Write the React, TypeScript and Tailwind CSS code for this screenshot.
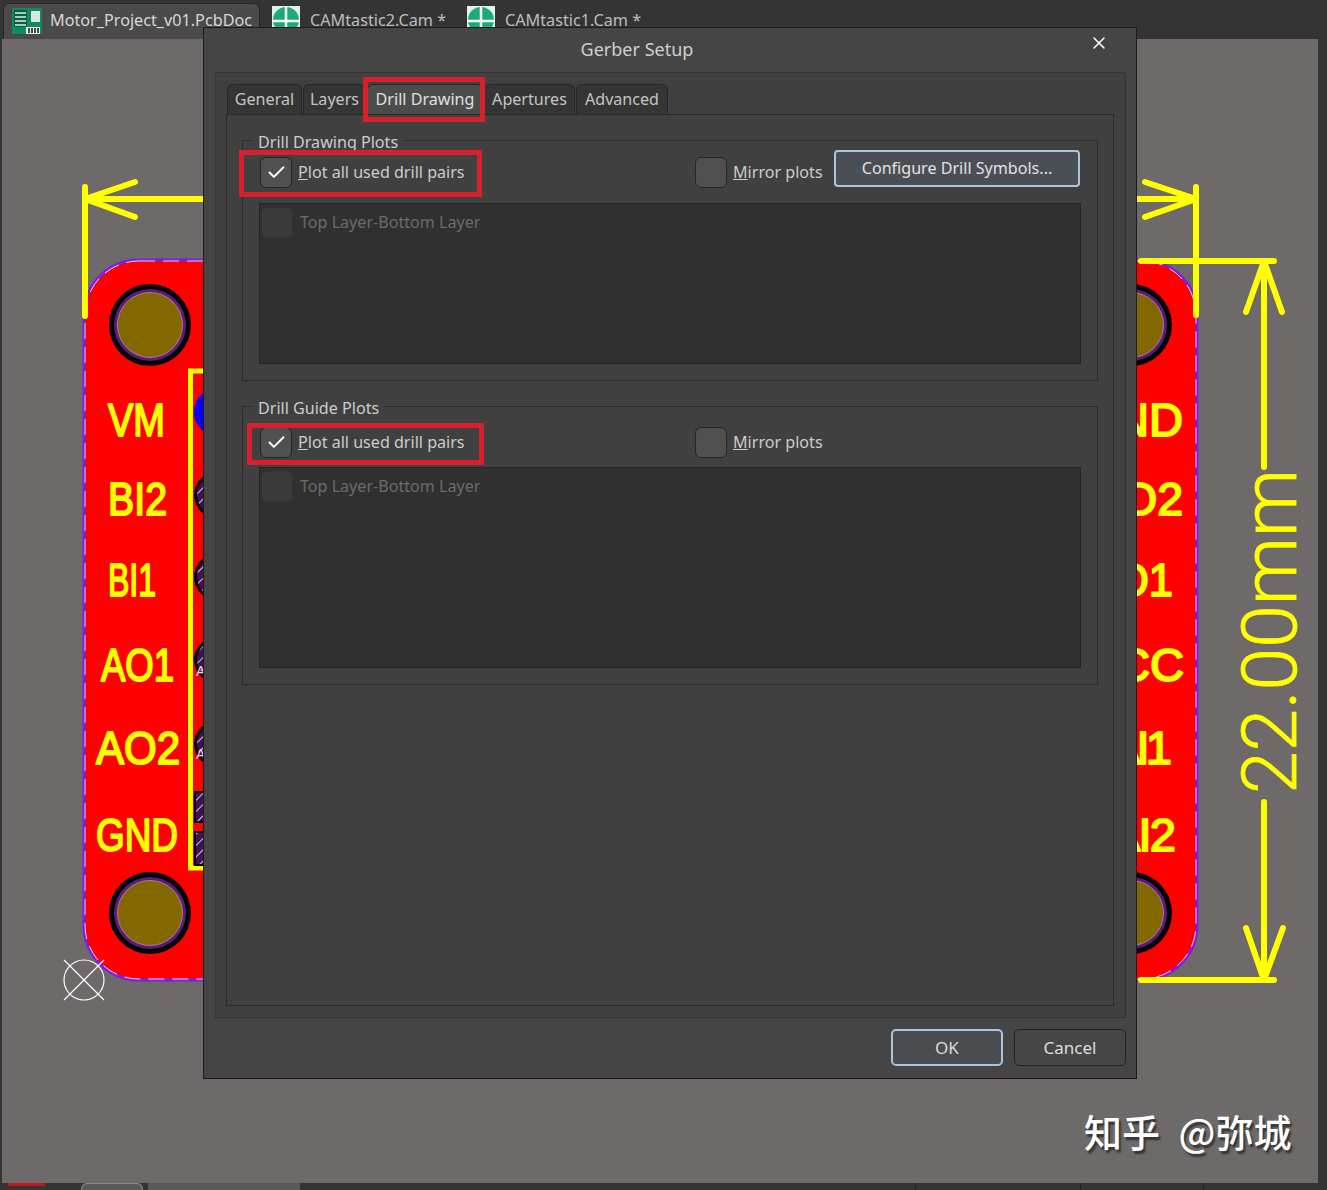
import { Check, X } from "lucide-react";

const LEFT_LABELS = [
  { text: "VM", x: 108, y: 436, w: 57 },
  { text: "BI2", x: 108, y: 515, w: 59 },
  { text: "BI1", x: 108, y: 596, w: 48 },
  { text: "AO1", x: 101, y: 681, w: 73 },
  { text: "AO2", x: 96, y: 764, w: 84 },
  { text: "GND", x: 96, y: 851, w: 82 },
];

const RIGHT_LABELS = [
  { text: "ND", x: 1183, y: 436, w: 68, tight: false },
  { text: "O2", x: 1183, y: 515, w: 62, tight: false },
  { text: "O1", x: 1173, y: 596, w: 58, tight: false },
  { text: "CC", x: 1184, y: 681, w: 68, tight: false },
  { text: "AI1", x: 1172, y: 764, w: 63, tight: true },
  { text: "AI2", x: 1176, y: 851, w: 67, tight: true },
];

const MOUNT_HOLES = [
  [150, 325],
  [150, 913],
  [1131, 325],
  [1131, 913],
];

function PcbIcon() {
  return (
    <svg width="32" height="28" viewBox="0 0 32 28" className="shrink-0">
      <rect x="1" y="1" width="30" height="26" fill="#0f8a63" />
      <rect x="3" y="3" width="13" height="17" fill="#0b5b44" />
      <path d="M4 6h11M4 10h11M4 14h11M4 18h11" stroke="#d6f3e6" strokeWidth="1.5" />
      <rect x="20" y="4" width="9" height="11" fill="#d8e8e0" />
      <rect x="15" y="20" width="14" height="7" fill="#e8f2ea" />
      <path d="M18 21v5M21 21v5M24 21v5M27 21v5" stroke="#111" strokeWidth="1.5" />
    </svg>
  );
}

function CamIcon() {
  return (
    <svg width="28" height="28" viewBox="0 0 28 28" className="shrink-0">
      <rect x="0" y="0" width="28" height="28" fill="#dff3ea" />
      <circle cx="14" cy="14" r="13" fill="#1fa87a" />
      <path d="M14 0v28M0 15h28" stroke="#f2fbf6" strokeWidth="2.5" />
    </svg>
  );
}

function Tick({ checked, dim }: { checked?: boolean; dim?: boolean }) {
  return (
    <span
      className={`flex h-[31px] w-[32px] shrink-0 items-center justify-center rounded-md border ${
        dim ? "border-[#333333] bg-[#3a3a3a]" : "border-[#262626] bg-[#505050]"
      }`}
    >
      {checked && <Check size={21} strokeWidth={2.2} className="text-white" />}
    </span>
  );
}

function DrillList({ height }: { height: string }) {
  return (
    <div className={`${height} border border-[#242424] bg-[#303030] pl-px pt-[3px]`}>
      <div className="flex items-center gap-[7px] text-[#6b6b6b]">
        <Tick dim />
        <span>Top Layer-Bottom Layer</span>
      </div>
    </div>
  );
}

function TabLabel({ label, width, active }: { label: string; width: string; active?: boolean }) {
  return (
    <div
      className={`flex h-[30px] items-center justify-center rounded-t-md border border-b-0 border-[#262626] ${width} ${
        active ? "bg-[#4c4c4c] text-[#e0e0e0]" : "bg-[#353535] text-[#c4c4c4]"
      }`}
    >
      {label}
    </div>
  );
}

function PcbCanvas() {
  return (
    <svg viewBox="2 39 1316 1144" className="h-full w-full">
      <defs>
        <pattern id="hatch" width="8" height="8" patternUnits="userSpaceOnUse" patternTransform="rotate(45)">
          <rect width="8" height="8" fill="#3f1158" />
          <rect width="1" height="8" fill="#d9c4e4" />
        </pattern>
      </defs>

      <rect x="84" y="260" width="1113" height="720" rx="55" fill="#ff0000" stroke="#7a1fe6" strokeWidth="3" />
      <rect x="85" y="261" width="1111" height="718" rx="54" fill="none" stroke="#f4c6e8" strokeWidth="1" strokeDasharray="16 8" />

      {MOUNT_HOLES.map(([cx, cy]) => (
        <g key={`${cx}-${cy}`}>
          <circle cx={cx} cy={cy} r="41" fill="#000000" />
          <circle cx={cx} cy={cy} r="36" fill="#5d1a7d" />
          <circle cx={cx} cy={cy} r="32.5" fill="#836800" stroke="#b98aa8" strokeWidth="0.8" />
        </g>
      ))}

      {/* connector outline, mostly under the dialog */}
      <rect x="190.5" y="371" width="300" height="497" fill="none" stroke="#ffff00" strokeWidth="5" />
      <circle cx="218" cy="412" r="24" fill="#0000ff" />
      {[495, 577, 660, 744].map((cy) => (
        <g key={cy}>
          <circle cx="217" cy={cy} r="23" fill="#000000" />
          <circle cx="217" cy={cy} r="20" fill="url(#hatch)" />
        </g>
      ))}
      <text x="196" y="676" fill="#f2d6ea" fontSize="14" fontFamily="Liberation Sans, sans-serif">A</text>
      <text x="196" y="759" fill="#f2d6ea" fontSize="14" fontFamily="Liberation Sans, sans-serif">A</text>
      <rect x="195" y="792" width="30" height="30" fill="url(#hatch)" stroke="#000000" strokeWidth="2" />
      <rect x="195" y="832" width="30" height="33" fill="url(#hatch)" stroke="#000000" strokeWidth="2" />

      {LEFT_LABELS.map((l) => (
        <text
          key={l.text}
          x={l.x}
          y={l.y}
          textLength={l.w}
          lengthAdjust="spacingAndGlyphs"
          fill="#ffff00"
          stroke="#ffff00"
          strokeWidth="2"
          strokeLinejoin="round"
          fontSize="47"
          fontFamily="Liberation Sans, sans-serif"
        >
          {l.text}
        </text>
      ))}
      {RIGHT_LABELS.map((l) => (
        <text
          key={l.text}
          x={l.x - l.w}
          y={l.y}
          textLength={l.w}
          lengthAdjust={l.tight ? "spacing" : "spacingAndGlyphs"}
          fill="#ffff00"
          stroke="#ffff00"
          strokeWidth="2"
          strokeLinejoin="round"
          fontSize="47"
          fontFamily="Liberation Sans, sans-serif"
        >
          {l.text}
        </text>
      ))}

      {/* width dimension */}
      <g fill="none" stroke="#ffff00" strokeWidth="6" strokeLinecap="round" strokeLinejoin="round">
        <path d="M85 187V316M1196 187V315M85 199H1196" />
        <path d="M135 182L85 199L135 217M1145 182L1196 199L1145 217" />
        <path d="M1141 261H1274M1141 980H1274M1264 261V467M1264 802V980" />
        <path d="M1246 312L1264 261L1282 312M1246 928L1264 980L1283 928" />
      </g>
      <text
        transform="translate(1296 794) rotate(-90)"
        textLength="325"
        lengthAdjust="spacingAndGlyphs"
        fill="#ffff00"
        stroke="#ffff00"
        strokeWidth="0.8"
        fontSize="76"
        fontWeight="300"
        fontFamily="Roboto, sans-serif"
      >
        22.00mm
      </text>

      {/* origin marker */}
      <circle cx="84" cy="980" r="20" fill="none" stroke="#ffffff" strokeWidth="1.2" />
      <path d="M64 960L104 1000M104 960L64 1000" stroke="#ffffff" strokeWidth="1.2" />
    </svg>
  );
}

export default function App() {
  return (
    <div className="relative flex h-[1190px] w-[1327px] flex-col overflow-hidden bg-[#343434] font-['Noto_Sans',sans-serif] text-[16.1px] text-[#cccccc]">
      {/* document tabs */}
      <div className="flex h-[39px] shrink-0 items-end pl-[3px] text-[16.2px]">
        <div className="flex h-[36px] w-[257px] items-center gap-[7px] rounded-t-md border border-b-0 border-[#262626] bg-[#4a4a4a] pb-[2px] pl-[7px] text-[#d8d8d8]">
          <PcbIcon />
          <span>Motor_Project_v01.PcbDoc</span>
        </div>
        <div className="flex h-[36px] w-[207px] items-center gap-[10px] pb-[2px] pl-[12px] text-[#bdbdbd]">
          <CamIcon />
          <span>CAMtastic2.Cam *</span>
        </div>
        <div className="flex h-[36px] items-center gap-[10px] pb-[2px] text-[#bdbdbd]">
          <CamIcon />
          <span>CAMtastic1.Cam *</span>
        </div>
      </div>

      {/* board view */}
      <div className="ml-[2px] mr-[9px] h-[1144px] shrink-0 bg-[#6e6a69]">
        <PcbCanvas />
      </div>

      {/* clipped status strip */}
      <div className="flex h-[7px] shrink-0 items-start pl-[8px]">
        <div className="h-[3px] w-[37px] bg-[#c4161c]" />
        <div className="ml-[36px] h-[7px] w-[62px] rounded-t-md border border-b-0 border-[#8a8a8a] bg-[#5a5a5a]" />
        <div className="ml-[5px] h-[7px] w-[152px] bg-[#5a5a5a]" />
        <div className="ml-[615px] h-[7px] w-px bg-[#222222]" />
        <div className="ml-[164px] h-[7px] w-px bg-[#222222]" />
        <div className="ml-[122px] h-[7px] w-px bg-[#222222]" />
      </div>

      {/* Gerber Setup dialog */}
      <div className="absolute left-[203px] top-[27px] flex h-[1052px] w-[934px] flex-col border border-[#1c1c1c] bg-[#454545]">
        <div className="relative flex h-[44px] shrink-0 items-center justify-center pb-[2px] pr-[66px] text-[18px] text-[#cfcfcf]">
          Gerber Setup
          <X size={20} strokeWidth={1.8} className="absolute right-[27px] top-[5px] text-white" />
        </div>

        <div className="ml-[11px] mr-[10px] flex flex-1 flex-col border border-[#343434] bg-[#404040] pb-[11px] pl-[10px] pr-[11px] pt-[11px]">
          <div className="flex h-[30px] shrink-0 gap-px pl-px">
            <TabLabel label="General" width="w-[75px]" />
            <TabLabel label="Layers" width="w-[63px]" />
            <TabLabel label="Drill Drawing" width="w-[116px]" active />
            <TabLabel label="Apertures" width="w-[91px]" />
            <TabLabel label="Advanced" width="w-[92px]" />
          </div>

          <div className="flex flex-1 flex-col gap-[25px] border border-[#2a2a2a] bg-[#404040] px-[15px] pt-[25px]">
            <div className="relative h-[241px] border border-[#2a2a2a] px-[16px] pb-[16px] pt-[9px]">
              <div className="absolute -top-[10px] left-[10px] bg-[#404040] px-[5px] leading-[22px]">Drill Drawing Plots</div>
              <div className="flex h-[53px] items-start pl-px pr-px">
                <div className="mt-[7px] flex w-[435px] items-center gap-[6px]">
                  <Tick checked />
                  <span><u>P</u>lot all used drill pairs</span>
                </div>
                <div className="mt-[7px] flex items-center gap-[6px]">
                  <Tick />
                  <span><u>M</u>irror plots</span>
                </div>
                <button className="ml-auto flex h-[37px] w-[246px] items-center justify-center rounded-[4px] border-2 border-[#a9c6de] bg-[#4a4f55] text-[#e2e2e2]">
                  Configure Drill Symbols...
                </button>
              </div>
              <DrillList height="h-[161px]" />
            </div>

            <div className="relative h-[279px] border border-[#2a2a2a] px-[16px] pt-[20px]">
              <div className="absolute -top-[10px] left-[10px] bg-[#404040] px-[5px] leading-[22px]">Drill Guide Plots</div>
              <div className="mb-[9px] flex items-center pl-px">
                <div className="flex w-[435px] items-center gap-[6px]">
                  <Tick checked />
                  <span><u>P</u>lot all used drill pairs</span>
                </div>
                <div className="flex items-center gap-[6px]">
                  <Tick />
                  <span><u>M</u>irror plots</span>
                </div>
              </div>
              <DrillList height="h-[201px]" />
            </div>
          </div>
        </div>

        <div className="flex h-[60px] shrink-0 items-start justify-end gap-[11px] pr-[10px] pt-[11px] text-[17px]">
          <button className="h-[37px] w-[112px] rounded-[5px] border-2 border-[#a9c6de] bg-[#4a4d50] text-[#dcdcdc]">OK</button>
          <button className="h-[37px] w-[112px] rounded-[5px] border border-[#222222] bg-[#474747] text-[#dcdcdc]">Cancel</button>
        </div>
      </div>

      {/* red annotation boxes */}
      <div className="absolute left-[363px] top-[77px] h-[45px] w-[122px] border-[5px] border-[#d8202c]" />
      <div className="absolute left-[239px] top-[150px] h-[47px] w-[243px] border-[5px] border-[#d8202c]" />
      <div className="absolute left-[247px] top-[423px] h-[42px] w-[237px] border-[5px] border-[#d8202c]" />

      {/* watermark */}
      <div className="absolute left-[1084px] top-[1104px] font-['Noto_Sans_CJK_SC',sans-serif] text-[38px] font-medium leading-[54px] text-white [text-shadow:2px_3px_2px_#333333] [word-spacing:10px]">
        知乎 @弥城
      </div>
    </div>
  );
}
